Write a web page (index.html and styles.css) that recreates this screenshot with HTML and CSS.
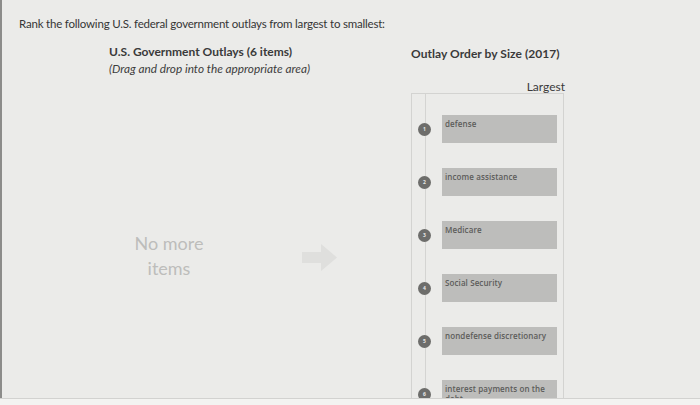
FILE: index.html
```html
<!DOCTYPE html>
<html>
<head>
<meta charset="utf-8">
<link rel="stylesheet" href="styles.css">
</head>
<body>
<div class="screen">
  <p class="prompt">Rank the following U.S. federal government outlays from largest to smallest:</p>
  <div class="main">
    <div class="source">
      <div class="col-title">U.S. Government Outlays (6 items)</div>
      <div class="col-sub">(Drag and drop into the appropriate area)</div>
      <div class="empty">No more<br>items</div>
    </div>
    <div class="arrow-col">
      <svg class="arrow" width="35" height="27" viewBox="0 0 35 27">
        <path d="M0 8 H19 V0 L35 13.5 L19 27 V19 H0 Z" fill="#dfdfdd"/>
      </svg>
    </div>
    <div class="target">
      <div class="col-title target-title">Outlay Order by Size (2017)</div>
      <div class="largest">Largest</div>
      <div class="panel">
        <div class="row"><span class="num">1</span><div class="item">defense</div></div>
        <div class="row"><span class="num">2</span><div class="item">income assistance</div></div>
        <div class="row"><span class="num">3</span><div class="item">Medicare</div></div>
        <div class="row"><span class="num">4</span><div class="item">Social Security</div></div>
        <div class="row"><span class="num">5</span><div class="item">nondefense discretionary</div></div>
        <div class="row"><span class="num">6</span><div class="item">interest payments on the debt</div></div>
      </div>
    </div>
  </div>
</div>
<div class="bar"></div>
</body>
</html>
```

FILE: styles.css
```css
html, body {
  margin: 0;
  padding: 0;
}
body {
  width: 700px;
  height: 405px;
  overflow: hidden;
  background: #f1f1ef;
  font-family: Lato, "Liberation Sans", sans-serif;
  color: #353535;
}
.screen {
  height: 398px;
  overflow: hidden;
  background: #ebebe9;
  border-left: 2px solid #8c8c8a;
  box-sizing: border-box;
}
.bar {
  height: 6px;
  border-top: 1px solid #d2d2d0;
  background: #f3f3f1;
}
.prompt {
  margin: 0;
  padding: 16px 0 0 17px;
  font-size: 11.5px;
  line-height: 15px;
  letter-spacing: -0.2px;
}
.main {
  display: flex;
  margin-top: 13px;
  padding-left: 107px;
}
.source {
  width: 190px;
}
.col-title {
  font-size: 12px;
  line-height: 15px;
  font-weight: 700;
  color: #3a3a3a;
  white-space: nowrap;
}
.col-sub {
  font-size: 11.8px;
  line-height: 15px;
  font-style: italic;
  color: #3d3d3d;
  margin-top: 2px;
  white-space: nowrap;
}
.empty {
  width: 120px;
  margin-top: 155px;
  text-align: center;
  font-size: 18px;
  line-height: 25px;
  color: #bdbdbb;
}
.arrow-col {
  width: 112px;
  padding-left: 3px;
  padding-top: 200px;
  box-sizing: border-box;
}
.arrow {
  display: block;
}
.target {
  width: 153px;
}
.target-title {
  margin-top: 2px;
  font-size: 12px;
  letter-spacing: 0.05px;
}
.largest {
  margin-top: 19px;
  font-size: 12px;
  line-height: 13px;
  text-align: right;
  margin-right: -1px;
  color: #3a3a3a;
}
.panel {
  height: 400px;
  border: 1px solid #d3d3d1;
  border-bottom: none;
  padding: 21px 5px 0 6px;
  box-sizing: border-box;
  background: linear-gradient(#d4d4d2, #d4d4d2) no-repeat 13px 0 / 1px 100%;
}
.row {
  display: flex;
  align-items: center;
  margin-bottom: 25px;
}
.num {
  flex: none;
  width: 13px;
  height: 13px;
  border-radius: 50%;
  background: #6d6d6b;
  color: #e8e8e8;
  font-family: "Open Sans", sans-serif;
  font-size: 5px;
  font-weight: 700;
  line-height: 13px;
  text-align: center;
}
.item {
  flex: none;
  margin-left: 11px;
  width: 115px;
  height: 28px;
  box-sizing: border-box;
  padding: 4px 5px 0 3px;
  background: #bdbdbb;
  font-family: "Open Sans", sans-serif;
  font-size: 8px;
  line-height: 10px;
  font-weight: 600;
  letter-spacing: 0.1px;
  color: #5c5c5a;
}
```
